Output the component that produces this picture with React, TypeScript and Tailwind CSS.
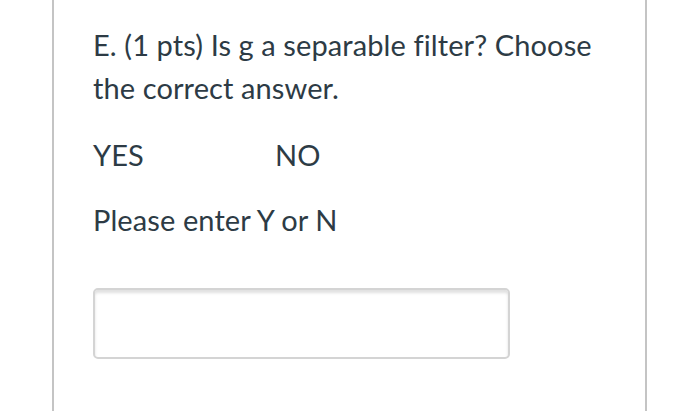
import React from "react";

export default function App() {
  return (
    <div className="w-[700px] h-[411px] bg-white overflow-hidden" style={{ fontFamily: "Lato, 'Noto Sans', sans-serif" }}>
      <div className="ml-[52px] w-[595px] h-[411px] border-x-2 border-[#c4c4c4] pl-[39px] pt-[23px] text-[#2d3b45] tracking-[0.1px]">
        <p className="text-[29px] leading-[43px] w-[520px]">
          E. (1 pts) Is g a separable filter? Choose the correct answer.
        </p>
        <div className="flex text-[29px] leading-[43px] mt-[24px]">
          <span className="w-[182px]">YES</span>
          <span>NO</span>
        </div>
        <p className="text-[29px] leading-[43px] mt-[22px]">Please enter Y or N</p>
        <div className="mt-[47px] w-[417px] h-[71px] rounded-[5px] border-2 border-[#d4d4d4] shadow-[inset_0_3px_3px_rgba(0,0,0,0.12)]" />
      </div>
    </div>
  );
}
